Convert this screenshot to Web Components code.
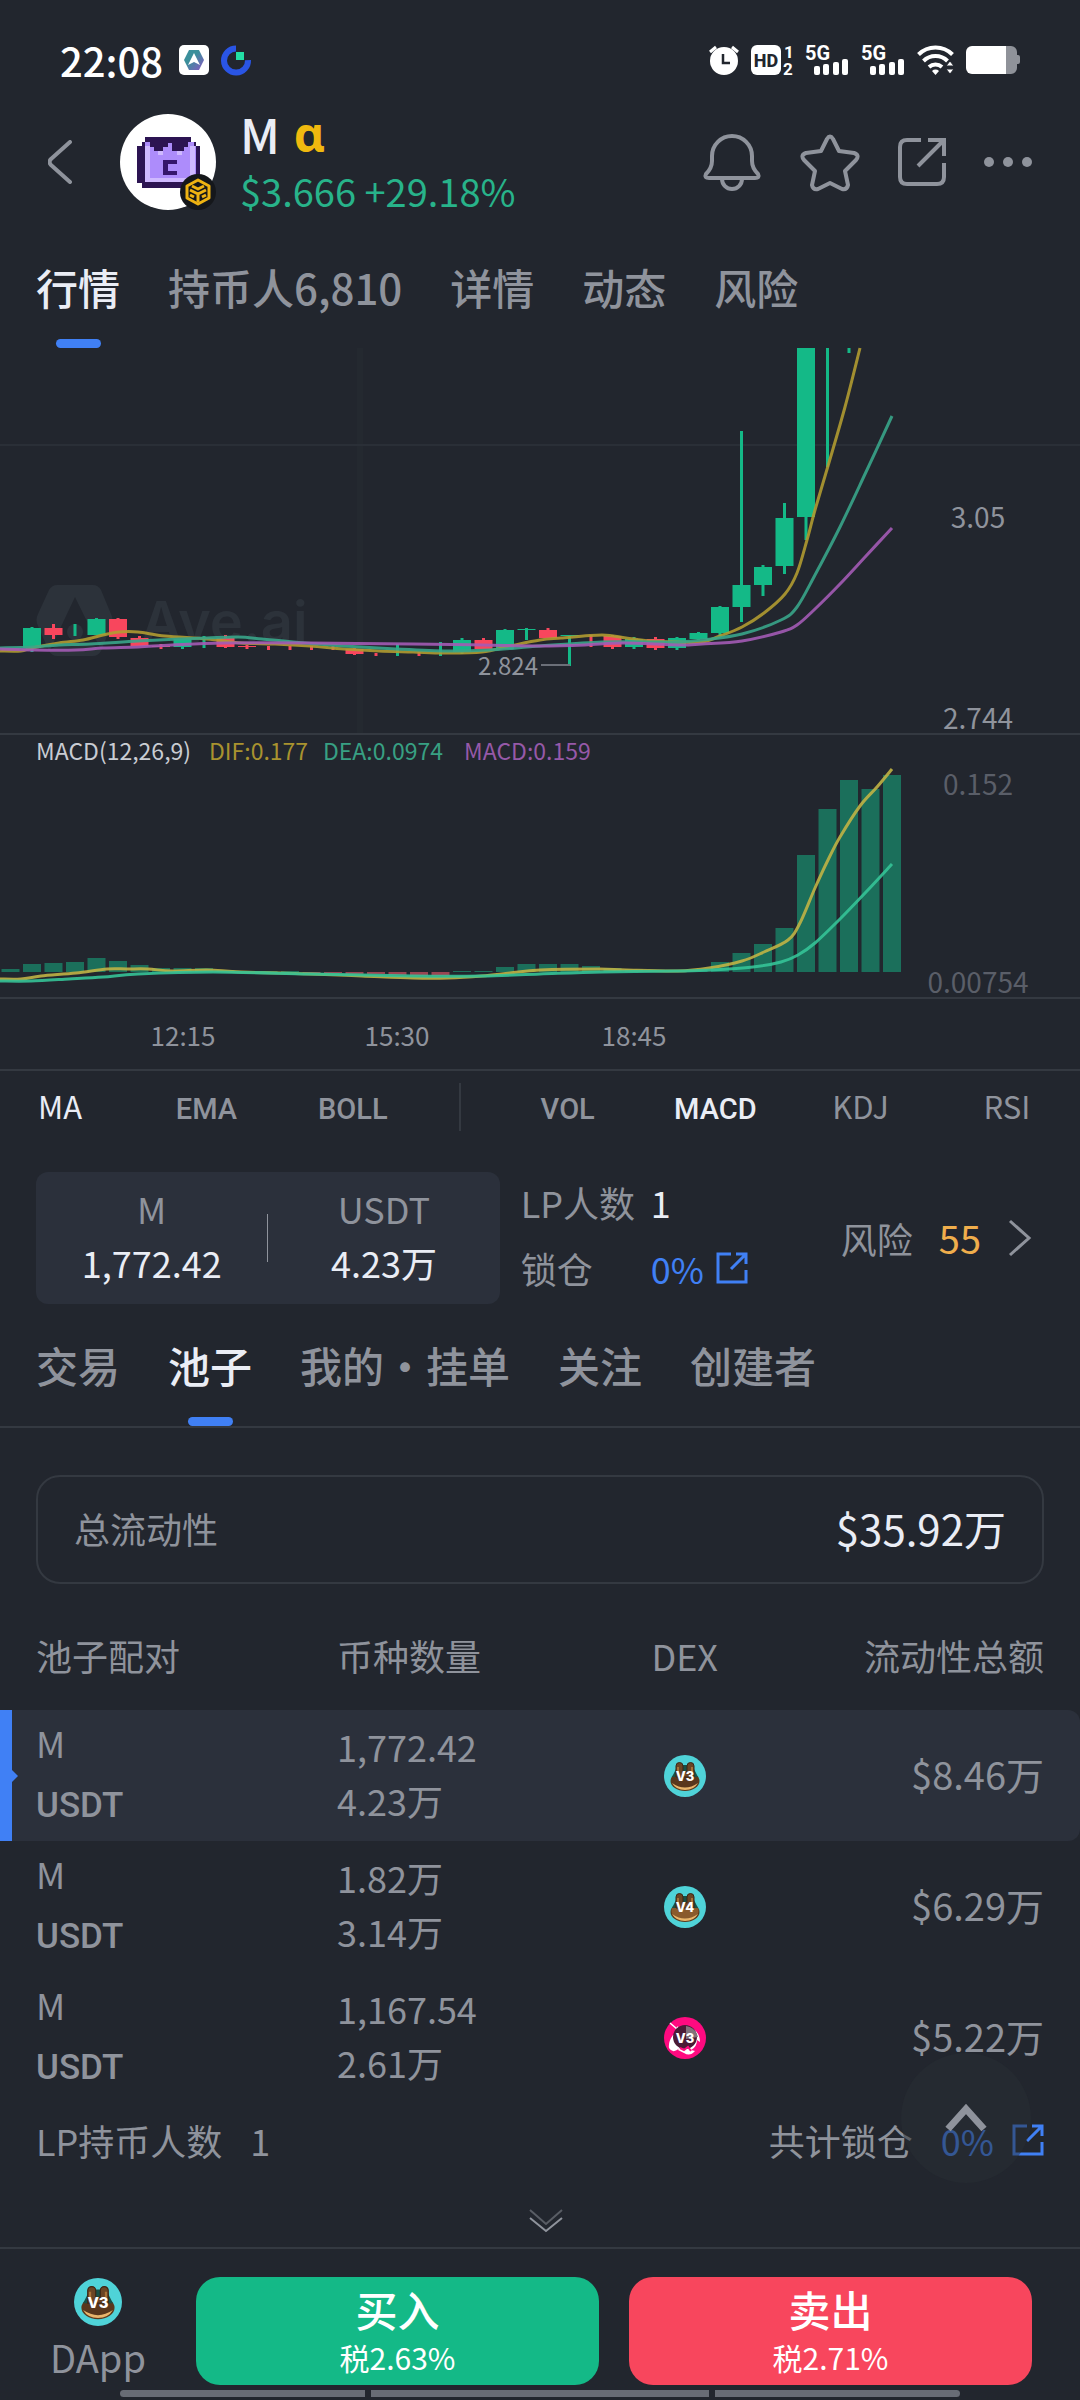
<!DOCTYPE html>
<html lang="zh-CN">
<head>
<meta charset="utf-8">
<meta name="viewport" content="width=device-width, initial-scale=1">
<title>M</title>
<style>
  html {
    --bg: #22262e;
    --panel: #2b303b;
    --line: #343941;
    --muted: #8f939c;
    --text: #eaedf5;
    --up: #14b987;
    --down: #f8465d;
    --accent: #4080f5;
    background: var(--bg);
  }
  body {
    margin: 0;
    min-height: 100vh;
    display: flex;
    flex-direction: column;
    background: var(--bg);
    color: var(--muted);
    font-family: "Noto Sans CJK SC", "Noto Sans", sans-serif;
    font-size: 36px;
    line-height: 54px;
  }
  .market { padding-top: 38px; }
  .detail { padding-top: 31px; border-bottom: 2px solid var(--line); }
  trade-bar { margin-top: auto; }
</style>
</head>
<body>
  <status-bar></status-bar>
  <token-header name="M" price="$3.666" change="+29.18%"></token-header>
  <tab-strip class="market">
    <tab-item active>行情</tab-item>
    <tab-item>持币人6,810</tab-item>
    <tab-item>详情</tab-item>
    <tab-item>动态</tab-item>
    <tab-item>风险</tab-item>
  </tab-strip>
  <kline-chart></kline-chart>
  <indicator-bar></indicator-bar>
  <pair-summary></pair-summary>
  <tab-strip class="detail">
    <tab-item>交易</tab-item>
    <tab-item active>池子</tab-item>
    <tab-item>我的·挂单</tab-item>
    <tab-item>关注</tab-item>
    <tab-item>创建者</tab-item>
  </tab-strip>
  <total-box>
    <span slot="label">总流动性</span>
    <span slot="value">$35.92万</span>
  </total-box>
  <pool-table></pool-table>
  <lock-summary></lock-summary>
  <trade-bar></trade-bar>

<script>
const RESET = `
  * { box-sizing: border-box; }
  button {
    margin: 0;
    padding: 0;
    border: 0;
    background: none;
    color: inherit;
    font: inherit;
    cursor: pointer;
  }
  a { color: inherit; text-decoration: none; }
  svg { display: block; }
`;

const LINK_ICON = `
  <svg width="32" height="32" viewBox="0 0 32 32" fill="none" stroke="currentColor" stroke-width="3" aria-hidden="true">
    <path d="M15 2H2v28h28V18M20 2h10v10M30 2L15 17"/>
  </svg>
`;

class StatusBar extends HTMLElement {
  constructor() {
    super();
    this.attachShadow({ mode: "open" });
    const signal = `
      <svg width="44" height="30" viewBox="0 0 44 30" fill="#fff">
        <text x="0" y="15" font-size="20" font-weight="700">5G</text>
        <rect x="9" y="21" width="6" height="9" rx="2"/>
        <rect x="18" y="19" width="6" height="11" rx="2"/>
        <rect x="28" y="17" width="6" height="13" rx="2"/>
        <rect x="37" y="14" width="6" height="16" rx="2"/>
      </svg>
    `;
    this.shadowRoot.innerHTML = `
      <style>
        ${RESET}
        :host {
          display: flex;
          align-items: center;
          gap: 12px;
          padding: 42px 60px 27px;
          color: #fff;
          line-height: 36px;
        }
        .time {
          font-size: 40px;
          font-weight: 500;
          margin-right: 4px;
        }
        .space { flex: 1; }
        svg { overflow: visible; }
        text { font-family: Roboto, sans-serif; }
      </style>
      <span class="time">22:08</span>
      <svg width="30" height="30" viewBox="0 0 30 30">
        <defs>
          <linearGradient id="ave" x1="0" y1="0" x2="1" y2="1">
            <stop offset=".4" stop-color="#3b8f9b"/>
            <stop offset="1" stop-color="#8a56c4"/>
          </linearGradient>
        </defs>
        <rect width="30" height="30" rx="5" fill="#fff"/>
        <path d="M10 5h10l5 10-5 10H10L5 15z" fill="url(#ave)"/>
        <path d="M15 8l6 12-6-3-6 3z" fill="#fff"/>
      </svg>
      <svg width="30" height="30" viewBox="0 0 30 30">
        <path d="M15 3.500A12 12 0 1 0 27 15" fill="none" stroke="#2a55e5" stroke-width="6"/>
        <rect x="15" y="7" width="8" height="8" fill="#23dfa5"/>
      </svg>
      <span class="space"></span>
      <svg width="30" height="30" viewBox="0 0 30 30">
        <circle cx="15" cy="16" r="14" fill="#fff"/>
        <path d="M1 7l6-5M29 7l-6-5" stroke="#fff" stroke-width="3"/>
        <path d="M14 9v9h7" fill="none" stroke="#22262e" stroke-width="2.500"/>
      </svg>
      <svg width="42" height="30" viewBox="0 0 42 30" fill="#fff">
        <rect width="30" height="30" rx="6"/>
        <text x="15" y="22" text-anchor="middle" font-size="18" font-weight="800" fill="#22262e">HD</text>
        <text x="33" y="13" font-size="17" font-weight="700">1</text>
        <text x="32" y="30" font-size="17" font-weight="700">2</text>
      </svg>
      ${signal}
      ${signal}
      <svg width="37" height="30" viewBox="0 0 37 30" fill="none" stroke="#fff" stroke-width="4">
        <path d="M1.500 9.500a24 24 0 0 1 34 0M6.500 16a17 17 0 0 1 24 0M12 22a10 10 0 0 1 13 0"/>
        <path d="M15 26l3.500 4 3.500-4a5 5 0 0 0-7 0z" fill="#fff" stroke="none"/>
        <path d="M29 21l4-5 4 5zM29 24l4 5 4-5z" fill="#fff" stroke="#22262e" stroke-width="1"/>
      </svg>
      <svg width="54" height="28" viewBox="0 0 54 28">
        <path d="M39 0h6a6 6 0 0 1 6 6v3h1q2 0 2 2v5q0 2-2 2h-1v4a6 6 0 0 1-6 6h-6z" fill="#8f9299"/>
        <path d="M6 0h34v28H6a6 6 0 0 1-6-6V6a6 6 0 0 1 6-6z" fill="#fff"/>
      </svg>
    `;
  }
}

class TokenHeader extends HTMLElement {
  constructor() {
    super();
    this.attachShadow({ mode: "open" });
    this.shadowRoot.innerHTML = `
      <style>
        ${RESET}
        :host {
          display: flex;
          align-items: center;
          padding: 0 48px;
        }
        .avatar { margin: 0 24px 0 48px; }
        .name {
          display: flex;
          gap: 14px;
          font-size: 48px;
          font-weight: 500;
          line-height: 57px;
          color: var(--text);
        }
        .alpha {
          font-family: "Noto Sans", sans-serif;
          font-weight: 700;
          color: #f0b90f;
        }
        .price {
          font-size: 38px;
          line-height: 57px;
          color: #28b38a;
        }
        .actions {
          display: flex;
          align-items: center;
          gap: 38px;
          margin-left: auto;
        }
        .icon {
          fill: none;
          stroke: var(--muted);
          stroke-width: 4;
          stroke-linecap: round;
          stroke-linejoin: round;
        }
        .share { stroke-linecap: butt; stroke-linejoin: miter; }
      </style>
      <button aria-label="返回">
        <svg class="icon" width="24" height="44" viewBox="0 0 24 44"><path d="M22 2L3 19q-3 3 0 6l19 17"/></svg>
      </button>
      <svg class="avatar" width="96" height="96" viewBox="0 0 96 96">
        <circle cx="48" cy="48" r="48" fill="#fff"/>
        <path d="M25 23h10v5h8v-5h9v5h9v-5h10v5h5v4h4v37h-4v5H22v-5h-5V32h5v-4h3z" fill="#2c1452"/>
        <path d="M25 28h5v5h4v4h9v-4h5v-4h4v4h4v4h8v-4h4v-5h6v4h2v36H25z" fill="#ad8cfb"/>
        <path d="M25 32h5v36h-5zM34 32h4v5h-4zM52 32h4v5h-4zM70 32h5v36h-5zM30 64h42v4H30zM38 37h5v4h-5zM57 37h5v4h-5z" fill="#cfb9ff"/>
        <path d="M34 23h9v10h-4v4h-5zM52 23h9v10h-5v4h-4z" fill="#2c1452"/>
        <path d="M43 46h14v4h-9v7h9v4H43z" fill="#35166c"/>
        <circle cx="78" cy="78" r="18" fill="#15171b"/>
        <g fill="none" stroke="#efb312" stroke-width="3" stroke-linejoin="round">
          <path d="M78 66l11 6v12l-11 6-11-6V72z"/>
          <path d="M70 76l8 4 8-4M78 80v8M72 72l6 3 6-3M70 81l4 2M86 81l-4 2"/>
        </g>
      </svg>
      <div>
        <div class="name"><span id="name"></span><span class="alpha">α</span></div>
        <div class="price" id="price"></div>
      </div>
      <div class="actions">
        <button aria-label="提醒">
          <svg class="icon" width="60" height="60" viewBox="0 0 60 60">
            <path d="M7 46q-5 0-3-4 6-6 6-13v-5a20 20 0 0 1 40 0v5q0 7 6 13 2 4-3 4zM20 47a10 10 0 0 0 20 0"/>
          </svg>
        </button>
        <button aria-label="收藏">
          <svg class="icon" width="60" height="60" viewBox="0 0 60 60">
            <path d="M27 7q3-5 6 0l6 12 15 2q6 2 2 7L45 39l3 14q-1 5-6 4l-12-6-12 6q-5 1-6-4l3-14L4 28q-4-5 2-7l15-2z"/>
          </svg>
        </button>
        <button aria-label="分享">
          <svg class="icon share" width="48" height="48" viewBox="0 0 48 48">
            <path d="M23 2H9q-7 0-7 7v30q0 7 7 7h30q7 0 7-7V25M30 2h16v16M46 2L20 28"/>
          </svg>
        </button>
        <button aria-label="更多">
          <svg width="48" height="48" viewBox="0 0 48 48" fill="#8f939c">
            <circle cx="5" cy="24" r="5"/><circle cx="24" cy="24" r="5"/><circle cx="43" cy="24" r="5"/>
          </svg>
        </button>
      </div>
    `;
  }

  connectedCallback() {
    this.shadowRoot.querySelector("#name").textContent = this.getAttribute("name");
    this.shadowRoot.querySelector("#price").textContent =
      `${this.getAttribute("price")} ${this.getAttribute("change")}`;
  }
}

class TabStrip extends HTMLElement {
  constructor() {
    super();
    this.attachShadow({ mode: "open" });
    this.shadowRoot.innerHTML = `
      <style>
        :host {
          display: flex;
          gap: 48px;
          padding-left: 36px;
          padding-right: 36px;
        }
      </style>
      <slot></slot>
    `;
    this.addEventListener("click", (e) => {
      const tab = e.target.closest("tab-item");
      if (!tab) return;
      this.querySelectorAll("tab-item").forEach((item) => item.toggleAttribute("active", item === tab));
    });
  }
}

class TabItem extends HTMLElement {
  constructor() {
    super();
    this.attachShadow({ mode: "open" });
    this.shadowRoot.innerHTML = `
      <style>
        ${RESET}
        :host {
          display: block;
          font-size: 42px;
          font-weight: 500;
          line-height: 60px;
          white-space: nowrap;
        }
        button::after {
          content: "";
          display: block;
          width: 45px;
          height: 9px;
          margin: 22px auto 0;
          border-radius: 5px;
        }
        :host([active]) { color: var(--text); }
        :host([active]) button::after { background: var(--accent); }
      </style>
      <button><slot></slot></button>
    `;
  }
}

// [body top, body bottom, high, low, up]; a zero height body leaves only the wick
const CANDLES = [
  [300, 303, 300, 303, 0], [280, 300, 279, 304, 1], [280, 287, 276, 291, 0], [0, 0, 276, 288, 1],
  [271, 287, 270, 287, 1], [271, 289, 270, 291, 0], [290, 298, 288, 298, 0], [298, 299, 296, 301, 0],
  [291, 299, 291, 301, 1], [0, 0, 288, 300, 1], [290, 299, 287, 300, 0], [298, 299, 297, 301, 0],
  [0, 0, 298, 302, 0], [0, 0, 298, 302, 0], [0, 0, 298, 302, 0], [0, 0, 298, 302, 0],
  [301, 306, 300, 307, 0], [0, 0, 305, 308, 0], [0, 0, 296, 308, 1], [0, 0, 304, 308, 0],
  [0, 0, 294, 308, 1], [292, 304, 290, 306, 1], [292, 301, 290, 301, 0], [282, 301, 281, 301, 1],
  [281, 282, 280, 292, 1], [282, 290, 280, 290, 0], [287, 288, 287, 318, 1], [0, 0, 287, 299, 0],
  [288, 299, 287, 301, 0], [291, 299, 289, 301, 1], [291, 300, 289, 302, 0], [290, 300, 289, 302, 1],
  [285, 291, 284, 292, 1], [259, 285, 258, 288, 1], [237, 259, 83, 274, 1], [219, 237, 217, 248, 1],
  [170, 218, 155, 226, 1], [0, 169, 0, 192, 1], [0, 0, 0, 119, 1], [0, 0, 0, 5, 1],
];

const MA = [
  ["#b09b31", "0,303 21,303 32,300 59,295 83,292 103,287 119,284 138,284 165,288 207,291 241,295 275,296 310,298 344,301 379,303 413,304 444,305 482,304 510,298 540,292 561,290 602,287 626,290 650,293 678,294 702,294 720,288 742,279 764,265 785,246 797,225 807,192 815,162 828,118 845,59 860,0"],
  ["#38a58a", "0,300 32,299 59,297 90,296 138,293 179,291 207,290 238,289 262,291 293,294 344,298 396,301 448,303 489,302 540,298 602,294 650,294 678,294 702,292 742,286 781,272 797,259 815,227 840,179 866,124 892,68"],
  ["#a35bb5", "0,301 34,302 76,302 103,300 138,299 172,297 224,295 310,295 413,296 482,297 540,298 585,297 623,295 678,297 702,296 742,293 781,284 797,277 815,261 840,236 866,208 892,180"],
];

// histogram heights, negative values hang below the zero line
const HIST = [
  3, 8, 9, 10, 14, 11, 7, 4, 4, 4, 2, 1, 1, 1, -1, -1, -2, -2, -3, -4, -4,
  1, 1, 5, 8, 8, 8, 6, 4, 3, 2, 1, 2, 10, 19, 28, 44, 117, 163, 192, 183, 197,
];

const MACD_LINES = [
  ["#c0b345", "0,244 21,244 41,241 76,238 107,234 127,234 148,234 172,236 207,235 241,237 310,239 362,241 413,243 448,243 482,241 510,238 540,235 599,234 626,235 678,236 709,233 742,226 764,217 788,205 800,188 815,153 828,125 840,102 860,71 877,52 892,34"],
  ["#35c397", "0,246 31,246 69,244 103,242 138,239 213,237 310,239 413,241 482,241 540,239 602,237 678,236 712,235 753,232 781,227 798,220 815,208 840,184 866,157 892,129"],
];

const STEP = 21.5;
const xOf = (i) => 10.5 + i * STEP;

// Catmull-Rom through the points, written as cubic segments
function smooth(list) {
  const p = list.split(" ").map((s) => s.split(",").map(Number));
  let d = `M${p[0]}`;
  for (let i = 0; i < p.length - 1; i++) {
    const a = p[i - 1] || p[i];
    const b = p[i];
    const c = p[i + 1];
    const e = p[i + 2] || c;
    d += `C${b[0] + (c[0] - a[0]) / 6},${b[1] + (c[1] - a[1]) / 6} ${c[0] - (e[0] - b[0]) / 6},${c[1] - (e[1] - b[1]) / 6} ${c}`;
  }
  return d;
}

const drawLines = (lines) => lines.map(([color, pts]) =>
  `<path d="${smooth(pts)}" fill="none" stroke="${color}" stroke-width="3" opacity=".9"/>`).join("");

class KlineChart extends HTMLElement {
  constructor() {
    super();
    this.attachShadow({ mode: "open" });
    this.shadowRoot.innerHTML = `
      <style>
        :host { display: block; }
        svg {
          display: block;
          width: 100%;
          overflow: visible;
          border-bottom: 2px solid var(--line);
        }
        text {
          font-size: 28px;
          fill: var(--muted);
        }
        .mark {
          font-family: Inter, sans-serif;
          font-size: 56px;
          font-weight: 600;
          fill: #2c323a;
        }
        .small { font-size: 24px; }
        .legend text { font-size: 23px; }
        .time { font-size: 26px; }
        .dim { fill: #5a5e68; }
      </style>
      <svg id="price" viewBox="0 0 1080 385"></svg>
      <svg id="macd" viewBox="0 0 1080 262"></svg>
      <svg viewBox="0 0 1080 70" text-anchor="middle">
        <text class="time" x="183" y="47">12:15</text>
        <text class="time" x="397" y="47">15:30</text>
        <text class="time" x="634" y="47">18:45</text>
      </svg>
    `;
  }

  connectedCallback() {
    this._drawPrice();
    this._drawMacd();
  }

  _drawPrice() {
    const candles = CANDLES.map(([top, bottom, high, low, up], i) => {
      const color = up ? "var(--up)" : "var(--down)";
      const x = xOf(i);
      return `<g fill="${color}">
        <rect x="${x - 1.5}" y="${high}" width="3" height="${low - high}"/>
        <rect x="${x - 9}" y="${top}" width="18" height="${bottom - top}"/>
      </g>`;
    }).join("");
    this.shadowRoot.querySelector("#price").innerHTML = `
      <rect x="357" width="6" height="385" fill="#242930"/>
      <rect y="96" width="1080" height="2" fill="#2a2f37"/>
      <path d="M57 237h36q5 0 8 5l10 24q3 6 0 12l-10 25q-3 5-8 5H57q-5 0-8-5l-11-25q-3-6 0-12l11-24q3-5 8-5zM75 249L50 302q26-19 51 0z" fill="#2c323a" fill-rule="evenodd"/>
      <circle cx="75" cy="284" r="8" fill="#2c323a"/>
      <text class="mark" x="141" y="294">Ave.ai</text>
      ${candles}
      ${drawLines(MA)}
      <text class="small" x="478" y="327">2.824</text>
      <rect x="541" y="316" width="29" height="2" fill="#6b6f78"/>
      <g text-anchor="middle">
        <text x="978" y="180">3.05</text>
        <text x="978" y="381">2.744</text>
      </g>
    `;
  }

  _drawMacd() {
    const bars = HIST.map((h, i) =>
      `<rect x="${xOf(i) - 9}" y="${h > 0 ? 237 - h : 237}" width="18" height="${Math.abs(h)}" fill="${h > 0 ? "#1b6f5b" : "#9a4553"}"/>`).join("");
    this.shadowRoot.querySelector("#macd").innerHTML = `
      <g class="legend">
        <text x="36" y="25" style="fill:#c9ccd3">MACD(12,26,9)</text>
        <text x="209" y="25" style="fill:#a9932f">DIF:0.177</text>
        <text x="323" y="25" style="fill:#38a083">DEA:0.0974</text>
        <text x="464" y="25" style="fill:#9659a8">MACD:0.159</text>
      </g>
      ${bars}
      ${drawLines(MACD_LINES)}
      <g text-anchor="middle">
        <text class="dim" x="978" y="60">0.152</text>
        <text class="dim" x="978" y="258">0.00754</text>
      </g>
    `;
  }
}

class IndicatorBar extends HTMLElement {
  constructor() {
    super();
    this.attachShadow({ mode: "open" });
    this.shadowRoot.innerHTML = `
      <style>
        ${RESET}
        :host {
          display: flex;
          align-items: center;
          justify-content: space-between;
          height: 72px;
          padding: 0 33px 0 20px;
        }
        button {
          width: 80px;
          padding-bottom: 2px;
          font-size: 31px;
          line-height: 48px;
        }
        .heavy {
          padding: 4px 0 0;
          font-family: Roboto, sans-serif;
          font-size: 29px;
          font-weight: 500;
        }
        .on { color: var(--text); }
        i {
          width: 2px;
          height: 48px;
          background: var(--line);
        }
      </style>
      <button class="on">MA</button>
      <button class="heavy">EMA</button>
      <button class="heavy">BOLL</button>
      <i></i>
      <button class="heavy">VOL</button>
      <button class="heavy on">MACD</button>
      <button>KDJ</button>
      <button>RSI</button>
    `;
  }
}

class PairSummary extends HTMLElement {
  constructor() {
    super();
    this.attachShadow({ mode: "open" });
    this.shadowRoot.innerHTML = `
      <style>
        ${RESET}
        :host {
          display: flex;
          align-items: center;
          padding: 29px 36px 0;
        }
        .pair {
          flex: 0 0 46%;
          display: flex;
          align-items: center;
          height: 132px;
          border-radius: 12px;
          background: var(--panel);
          text-align: center;
        }
        .pair div { flex: 1; padding-bottom: 6px; }
        .pair i {
          width: 1px;
          height: 48px;
          background: var(--muted);
        }
        b {
          display: block;
          font-weight: 400;
          color: var(--text);
        }
        dl {
          display: grid;
          grid-template-columns: 130px auto;
          row-gap: 12px;
          margin: 0 0 0 21px;
          padding-bottom: 6px;
        }
        dd {
          display: flex;
          align-items: center;
          margin: 0;
          color: var(--text);
        }
        dd a {
          display: flex;
          align-items: center;
          gap: 12px;
          color: var(--accent);
        }
        .risk {
          display: flex;
          align-items: center;
          margin: 0 12px 0 auto;
        }
        .risk b {
          margin: 0 27px 0 26px;
          font-size: 38px;
          color: #f0ae4c;
        }
      </style>
      <div class="pair">
        <div>M<b>1,772.42</b></div>
        <i></i>
        <div>USDT<b>4.23万</b></div>
      </div>
      <dl>
        <dt>LP人数</dt><dd>1</dd>
        <dt>锁仓</dt><dd><a href="#lock">0% ${LINK_ICON}</a></dd>
      </dl>
      <button class="risk">风险<b>55</b>
        <svg width="24" height="38" viewBox="0 0 24 38" fill="none" stroke="#8f939c" stroke-width="3"><path d="M2 2l19 17L2 36"/></svg>
      </button>
    `;
  }
}

class TotalBox extends HTMLElement {
  constructor() {
    super();
    this.attachShadow({ mode: "open" });
    this.shadowRoot.innerHTML = `
      <style>
        :host {
          display: flex;
          align-items: center;
          justify-content: space-between;
          box-sizing: border-box;
          height: 109px;
          margin: 47px 36px 0;
          padding: 0 36px 4px;
          border: 2px solid var(--line);
          border-radius: 24px;
        }
        slot[name="value"] {
          font-size: 42px;
          color: var(--text);
        }
      </style>
      <slot name="label"></slot>
      <slot name="value"></slot>
    `;
  }
}

class DexIcon extends HTMLElement {
  constructor() {
    super();
    this.attachShadow({ mode: "open" });
  }

  connectedCallback() {
    const size = this.getAttribute("size") || 42;
    const version = this.getAttribute("version");
    const bunny = `
      <circle cx="21" cy="21" r="21" fill="#4fd3d8"/>
      <ellipse cx="21" cy="26" rx="14.500" ry="10" fill="#5b3a1c"/>
      <ellipse cx="21" cy="25" rx="13.500" ry="9" fill="${version === "V4" ? "#8a5a2c" : "#59371c"}"/>
      <path d="M8 28q13 9 26 0-4 7-13 7T8 28z" fill="#e9b56b"/>
      <path d="M8 22l6-12h14l6 12z" fill="#175047"/>
      <path d="M12 22V11a3.500 3.500 0 0 1 7 0v6h4v-6a3.500 3.500 0 0 1 7 0v11z" fill="#6b4524" stroke="#3d2614"/>
      <path d="M14 12v5M28 12v5" stroke="#a87238" stroke-width="2"/>
    `;
    const unicorn = `
      <circle cx="21" cy="21" r="21" fill="#ff0a80"/>
      <path d="M6 6l14 12M13 10l8 5" stroke="#fff" stroke-width="1.500"/>
      <path d="M9 18q-5 7-4 13 3 5 8 2l5-4-4-9zM27 11q9 4 9 14l-3-2q0 7-6 10l4 1q-5 6-11 2l-6-3" fill="#fff"/>
      <circle cx="21" cy="20" r="12" fill="#4b1b36"/>
      <path d="M22 9q10 2 12 11l-12 2z" fill="#82737b"/>
      <path d="M16 31l4 2 4-3 3 4" fill="none" stroke="#ff0a80" stroke-width="2"/>
    `;
    this.shadowRoot.innerHTML = `
      <style>
        :host { display: block; width: fit-content; margin: 0 auto; }
        svg { display: block; overflow: visible; }
        text {
          font-family: Inter, sans-serif;
          font-size: 13px;
          font-weight: 800;
          fill: #fff;
        }
      </style>
      <svg width="${size}" height="${size}" viewBox="0 0 42 42">
        ${this.getAttribute("dex") === "uniswap" ? unicorn : bunny}
        <text x="21" y="26" text-anchor="middle">${version}</text>
      </svg>
    `;
  }
}

const POOLS = [
  { base: "1,772.42", quote: "4.23万", dex: "pancake", version: "V3", total: "$8.46万", selected: true },
  { base: "1.82万", quote: "3.14万", dex: "pancake", version: "V4", total: "$6.29万" },
  { base: "1,167.54", quote: "2.61万", dex: "uniswap", version: "V3", total: "$5.22万" },
];

class PoolTable extends HTMLElement {
  constructor() {
    super();
    this.attachShadow({ mode: "open" });
    const rows = POOLS.map((pool) => `
      <tr class="${pool.selected ? "selected" : ""}">
        <td class="names">M<b>USDT</b></td>
        <td class="amounts">${pool.base}<br>${pool.quote}</td>
        <td><dex-icon dex="${pool.dex}" version="${pool.version}"></dex-icon></td>
        <td class="total">${pool.total}</td>
      </tr>
    `).join("");
    this.shadowRoot.innerHTML = `
      <style>
        * { box-sizing: border-box; }
        :host { display: block; padding-top: 16px; }
        table {
          width: 100%;
          table-layout: fixed;
          border-collapse: collapse;
        }
        th, td { padding: 0; text-align: left; }
        th { height: 110px; font-weight: 400; }
        td { height: 131px; }
        th:nth-child(1) { width: 31.2%; }
        th:nth-child(2) { width: 24.4%; }
        th:nth-child(3) { width: 15.6%; }
        tr > :nth-child(1) { padding-left: 36px; }
        tr > :nth-child(3) { text-align: center; }
        tr > :nth-child(4) { padding-right: 36px; text-align: right; }
        .names { line-height: 60px; position: relative; }
        .names b {
          display: block;
          font-family: Roboto, sans-serif;
          font-size: 35px;
          font-weight: 500;
          line-height: 68px;
        }
        .amounts { padding-bottom: 6px; }
        .total { padding-bottom: 4px; font-size: 38px; }
        .selected td { background: var(--panel); }
        .selected td:first-child { box-shadow: inset 12px 0 var(--accent); }
        .selected td:last-child { border-radius: 0 12px 12px 0; }
        /* pointer on the edge of the selection mark */
        .selected .names::after {
          content: "";
          position: absolute;
          left: 12px;
          top: 50%;
          margin-top: -6px;
          border: 6px solid transparent;
          border-left-color: var(--accent);
          border-right-width: 0;
        }
      </style>
      <table>
        <thead>
          <tr><th>池子配对</th><th>币种数量</th><th>DEX</th><th>流动性总额</th></tr>
        </thead>
        <tbody>${rows}</tbody>
      </table>
    `;
  }
}

class LockSummary extends HTMLElement {
  constructor() {
    super();
    this.attachShadow({ mode: "open" });
    this.shadowRoot.innerHTML = `
      <style>
        ${RESET}
        :host { display: block; }
        .row {
          position: relative;
          display: flex;
          align-items: center;
          gap: 28px;
          height: 74px;
          padding: 0 36px;
        }
        .row a {
          display: flex;
          align-items: center;
          gap: 18px;
          color: var(--accent);
        }
        .locked { margin-left: auto; }
        .top {
          position: absolute;
          right: 49px;
          top: -50px;
          width: 130px;
          height: 130px;
          padding-left: 44px;
          border-radius: 50%;
          background: rgba(39, 46, 52, 0.5);
        }
        .more {
          display: block;
          margin: 32px auto 0;
          padding-left: 12px;
        }
      </style>
      <div class="row">
        <span>LP持币人数</span><span>1</span>
        <span class="locked">共计锁仓</span>
        <a href="#lock">0% ${LINK_ICON}</a>
        <button class="top" aria-label="回到顶部">
          <svg width="42" height="28" viewBox="0 0 42 28" fill="none" stroke="#8f939c" stroke-width="7"><path d="M3 25L21 5l18 20"/></svg>
        </button>
      </div>
      <button class="more" aria-label="展开">
        <svg width="34" height="24" viewBox="0 0 34 24" fill="none" stroke="#8f939c" stroke-width="2">
          <path d="M1 1l16 14L33 1" opacity=".5"/>
          <path d="M1 9l16 13L33 9"/>
        </svg>
      </button>
    `;
  }
}

class TradeBar extends HTMLElement {
  constructor() {
    super();
    this.attachShadow({ mode: "open" });
    this.shadowRoot.innerHTML = `
      <style>
        ${RESET}
        :host {
          display: block;
          border-top: 2px solid var(--line);
          padding: 28px 48px 3px;
        }
        .row {
          display: flex;
          gap: 30px;
        }
        .dapp {
          width: 100px;
          margin-right: 18px;
          font-size: 38px;
          text-align: center;
        }
        dex-icon { margin-bottom: 4px; }
        .trade {
          flex: 1;
          height: 108px;
          border-radius: 24px;
          color: #fff;
          font-size: 42px;
          font-weight: 500;
          line-height: 52px;
        }
        .buy { background: var(--up); }
        .sell { background: var(--down); }
        small {
          display: block;
          font-size: 30px;
          font-weight: 400;
          line-height: 44px;
        }
        .home {
          display: flex;
          gap: 6px;
          height: 7px;
          margin: 5px 72px 0;
        }
        .home i { flex: 245; background: #686c75; }
        .home i:nth-child(2) { flex: 338; }
        .home i:first-child { border-radius: 4px 0 0 4px; }
        .home i:last-child { border-radius: 0 4px 4px 0; }
      </style>
      <div class="row">
        <button class="dapp"><dex-icon dex="pancake" version="V3" size="48"></dex-icon>DApp</button>
        <button class="trade buy">买入<small>税2.63%</small></button>
        <button class="trade sell">卖出<small>税2.71%</small></button>
      </div>
      <div class="home"><i></i><i></i><i></i></div>
    `;
  }
}

customElements.define("status-bar", StatusBar);
customElements.define("token-header", TokenHeader);
customElements.define("tab-strip", TabStrip);
customElements.define("tab-item", TabItem);
customElements.define("kline-chart", KlineChart);
customElements.define("indicator-bar", IndicatorBar);
customElements.define("pair-summary", PairSummary);
customElements.define("total-box", TotalBox);
customElements.define("dex-icon", DexIcon);
customElements.define("pool-table", PoolTable);
customElements.define("lock-summary", LockSummary);
customElements.define("trade-bar", TradeBar);
</script>
</body>
</html>
